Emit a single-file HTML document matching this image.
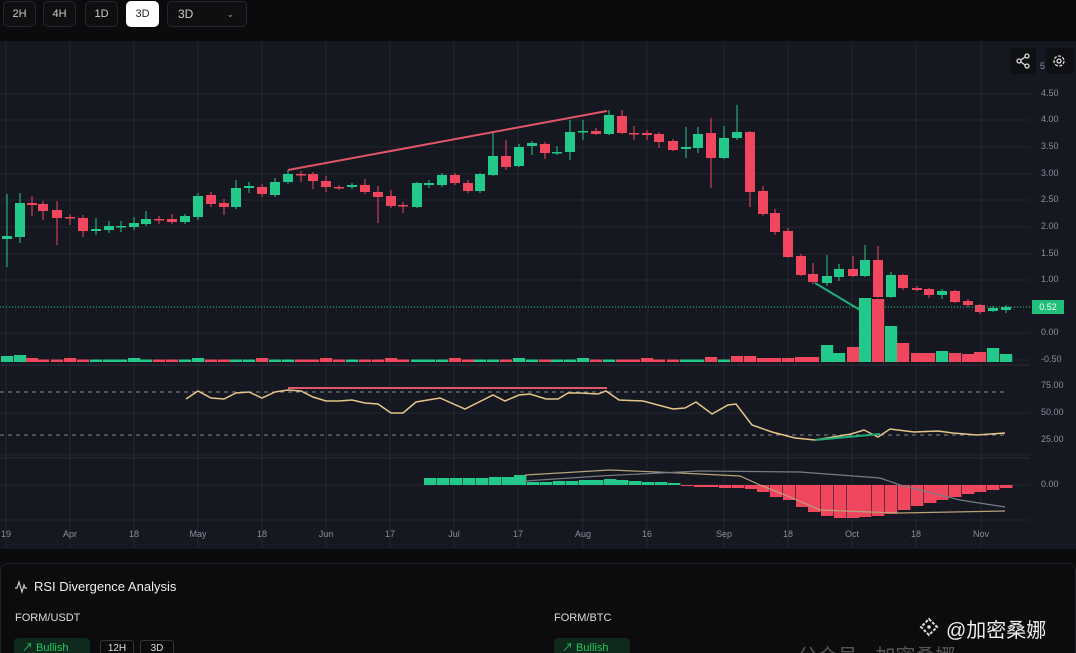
<!DOCTYPE html>
<html><head><meta charset="utf-8"><style>
*{margin:0;padding:0;box-sizing:border-box}
html,body{width:1076px;height:653px;overflow:hidden}
body{background:#0b0b0d;font-family:"Liberation Sans","Noto Sans CJK SC",sans-serif;color:#ddd;position:relative}
.btn{position:absolute;top:1px;height:26px;border:1px solid #26262a;border-radius:5px;background:#0f0f11;color:#ccc;font-size:11px;line-height:24px;text-align:center}
.lbl{position:absolute;font-size:9px;color:#8a8e99}
.card{position:absolute;left:0;top:563px;width:1076px;height:100px;border:1px solid #222226;border-radius:8px;background:#0c0c0e}
</style></head><body>
<div class="btn" style="left:3px;width:33px">2H</div>
<div class="btn" style="left:43px;width:33px">4H</div>
<div class="btn" style="left:85px;width:33px">1D</div>
<div class="btn" style="left:126px;width:33px;background:#fff;color:#222;border-color:#fff">3D</div>
<div class="btn" style="left:167px;width:80px;text-align:left;padding-left:10px;font-size:12px">3D<span style="position:absolute;right:12px;font-size:9px;color:#999">⌄</span></div>
<div style="position:absolute;left:0;top:41px;width:1076px;height:508px;background:#151821"></div>
<svg id="s" width="1076" height="653" style="position:absolute;left:0;top:0"></svg>
<div style="position:absolute;left:1010px;top:48px;width:26px;height:26px;background:#0e1014;border-radius:3px"></div>
<div style="position:absolute;left:1046px;top:48px;width:28px;height:26px;background:#0e1014;border-radius:3px"></div>
<div class="lbl" style="left:1040px;top:61px">5</div>
<div id="ax"></div>
<div style="position:absolute;left:1032px;top:300px;width:32px;height:14px;background:#1fbf7a;color:#fff;font-size:9px;line-height:14px;text-align:center">0.52</div>
<div class="card"></div>
<div style="position:absolute;left:34px;top:579px;font-size:13px;color:#eee">RSI Divergence Analysis</div>
<div style="position:absolute;left:15px;top:612px;font-size:11px;color:#ddd">FORM/USDT</div>
<div style="position:absolute;left:554px;top:612px;font-size:11px;color:#ddd">FORM/BTC</div>
<div style="position:absolute;left:14px;top:638px;width:76px;height:22px;background:#0f2a1d;border-radius:4px;color:#22c55e;font-size:11px;line-height:20px;padding-left:8px">↗ Bullish</div>
<div style="position:absolute;left:554px;top:638px;width:76px;height:22px;background:#0f2a1d;border-radius:4px;color:#22c55e;font-size:11px;line-height:20px;padding-left:8px">↗ Bullish</div>
<div style="position:absolute;left:100px;top:640px;width:34px;height:18px;border:1px solid #333;border-radius:3px;font-size:10px;text-align:center;line-height:16px">12H</div>
<div style="position:absolute;left:140px;top:640px;width:34px;height:18px;border:1px solid #333;border-radius:3px;font-size:10px;text-align:center;line-height:16px">3D</div>
<div style="position:absolute;left:946px;top:614px;font-size:20px;color:#eee">@加密桑娜</div>
<div style="position:absolute;left:780px;top:640px;font-size:20px;color:#555">● 公众号 · 加密桑娜</div>
<svg width="1076" height="653" style="position:absolute;left:0;top:0">
<g stroke="#ddd" stroke-width="1.3" fill="none"><circle cx="1027" cy="56" r="2"/><circle cx="1027" cy="66" r="2"/><circle cx="1019" cy="61" r="2"/><path d="M1021 60l4-3M1021 62l4 3"/>
<circle cx="1059" cy="61" r="2"/><circle cx="1059" cy="61" r="5" stroke-dasharray="3 1.5"/></g>
<path d="M15 588h2l2-6 3 10 2-7 1 3h2" stroke="#ccc" fill="none" stroke-width="1.2"/>
<path d="M929 619l8 8-8 8-8-8z" stroke="#ddd" fill="none" stroke-width="2" stroke-dasharray="3 1.5"/><circle cx="929" cy="627" r="1.8" fill="#ddd"/>
</svg>
<script>
var S=document.getElementById('s'),h='';
function L(x1,y1,x2,y2,c,w,d){h+='<line x1="'+x1+'" y1="'+y1+'" x2="'+x2+'" y2="'+y2+'" stroke="'+c+'" stroke-width="'+(w||1)+'"'+(d?' stroke-dasharray="'+d+'"':'')+'/>';}
function R(x,y,w,hh,c){h+='<rect x="'+x+'" y="'+y+'" width="'+w+'" height="'+hh+'" fill="'+c+'"/>';}
var vx=[6,70,134,198,262,326,390,454,518,583,647,724,788,852,916,981];
vx.forEach(function(x){L(x,42,x,548,'#22252e');});
[94,120,147,174,200,227,254,280,307,333,360,413,455,485,520].forEach(function(y){L(0,y,1030,y,'#22252e');});
L(0,365,1030,365,'#2a2d36');L(0,458,1030,458,'#2a2d36');
var G='#22c98a',Rd='#f0475f';
var c=[[7,239,236,194,267],[20,237,203,193,243],[32,203,205,196,216],[43,204,211,201,220],[57,210,218,201,245],[70,217,218,214,225],[83,218,231,215,237],[96,231,229,218,235],[109,230,226,221,233],[121,227,226,221,232],[134,227,223,217,230],[146,224,219,211,226],[159,219,220,216,224],[172,219,222,214,224],[185,222,216,214,224],[198,217,196,193,220],[211,195,204,192,207],[224,203,207,199,215],[236,207,188,180,209],[249,188,186,182,193],[262,187,194,184,197],[275,195,182,178,197],[288,182,174,170,184],[301,174,175,171,182],[313,174,181,172,189],[326,181,187,176,192],[339,187,188,185,190],[352,187,185,183,189],[365,185,192,179,194],[378,192,197,186,223],[391,196,206,190,208],[403,205,206,202,213],[417,207,183,182,208],[429,185,183,180,188],[442,185,175,173,187],[455,175,183,173,185],[468,183,191,180,193],[480,191,174,173,193],[493,175,156,133,176],[506,156,167,140,170],[519,166,147,144,167],[532,146,143,141,155],[545,144,153,142,159],[557,153,152,146,155],[570,152,132,120,160],[583,132,131,120,140],[596,131,134,128,135],[609,134,115,110,135],[622,116,133,110,134],[634,133,134,126,140],[647,133,135,130,140],[659,134,142,132,148],[673,141,150,139,151],[686,149,147,127,158],[698,148,134,127,153],[711,133,158,118,188],[724,158,138,126,159],[737,138,132,105,140],[750,132,192,131,207],[763,191,214,186,216],[775,213,232,209,235],[788,231,257,228,258],[801,256,275,254,276],[813,274,282,263,284],[827,283,276,255,286],[839,277,269,264,281],[853,269,276,256,277],[865,276,260,245,277],[878,260,297,246,298],[891,297,275,272,298],[903,275,288,274,290],[917,288,290,286,291],[929,289,295,288,298],[942,295,291,289,299],[955,291,302,290,303],[968,301,305,299,307],[980,305,312,304,314],[993,311,308,306,312],[1006,310,307,305,313]];
c.forEach(function(k){var col=k[2]<k[1]?G:Rd;L(k[0],k[3],k[0],k[4],col);var t=Math.min(k[1],k[2]),b=Math.max(k[1],k[2]);R(k[0]-5,t,10,Math.max(b-t,1.5),col);});
L(288,170,607,111,'#e05567',2);L(815,283,870,316,'#1fae78',2);
L(0,307,1030,307,'#1fbf7a',1,'1 2');
var big={827:[17,G],839:[9,G],853:[15,Rd],865:[64,G],878:[63,Rd],891:[36,G],903:[19,Rd],917:[9,Rd],929:[9,Rd],942:[11,G],955:[9,Rd],968:[8,Rd],980:[10,Rd],993:[14,G],1006:[8,G],737:[6,Rd],750:[6,Rd],763:[4,Rd],788:[4,Rd],801:[5,Rd],813:[5,Rd],711:[5,Rd],7:[6,G],20:[7,G],32:[4,Rd]};
c.forEach(function(k,i){var b=big[k[0]];var v=b?b[0]:(i%5==0?4:2.5);var col=b?b[1]:(k[2]<k[1]?G:Rd);R(k[0]-6,362-v,12.2,v,col);});
L(0,392,1007,392,'#888',1,'4 4');L(0,435,1007,435,'#888',1,'4 4');
var rp=[[186,399],[198,391],[211,398],[224,399],[236,393],[249,392],[262,398],[275,392],[288,390],[301,391],[313,397],[326,401],[339,401],[352,400],[365,403],[378,404],[391,413],[403,413],[416,402],[440,398],[465,409],[493,395],[505,401],[519,395],[530,394],[546,399],[558,399],[568,393],[580,393],[598,394],[606,391],[619,400],[643,401],[673,409],[685,408],[696,402],[712,414],[728,405],[736,404],[752,425],[772,432],[795,438],[815,440],[839,436],[851,434],[864,430],[878,437],[890,429],[914,432],[938,431],[953,433],[977,435],[1005,433]];
h+='<polyline fill="none" stroke="#e6c58a" stroke-width="1.5" points="'+rp.join(' ')+'"/>';
L(288,388,607,388,'#e05567',2);L(815,440,880,434,'#1fae78',2);
var gm=[[430,478],[443,478],[456,478],[469,478],[482,478],[495,477],[508,477],[520,475],[533,482],[546,482],[559,481],[572,481],[585,480],[597,480],[610,479],[622,480],[635,481],[648,482],[661,482],[674,483]];
gm.forEach(function(p){R(p[0]-6,p[1],12.4,485-p[1],G);});
var rm=[[687,486],[700,487],[712,487],[725,488],[738,488],[751,489],[763,492],[776,497],[789,500],[802,507],[814,512],[827,516],[840,518],[853,518],[865,517],[878,516],[891,514],[904,510],[917,506],[930,503],[942,500],[955,497],[968,494],[980,492],[993,490],[1006,488]];
rm.forEach(function(p){R(p[0]-6,485,12.4,p[1]-485,Rd);});
h+='<polyline fill="none" stroke="#b9a27a" stroke-width="1.2" points="525,475 610,470 680,473 740,476 760,485 790,497 820,510 870,512 900,513 1005,511"/>';
h+='<polyline fill="none" stroke="#777b85" stroke-width="1.2" points="525,481 600,476 700,471 800,472 880,478 900,485 960,500 1005,507"/>';
S.innerHTML=h;
var ax='';[['4.50',94],['4.00',120],['3.50',147],['3.00',174],['2.50',200],['2.00',227],['1.50',254],['1.00',280],['0.00',333],['-0.50',360],['75.00',386],['50.00',413],['25.00',440],['0.00',485]].forEach(function(a){ax+='<div class="lbl" style="left:1041px;top:'+(a[1]-6)+'px">'+a[0]+'</div>';});
[['19',6],['Apr',70],['18',134],['May',198],['18',262],['Jun',326],['17',390],['Jul',454],['17',518],['Aug',583],['16',647],['Sep',724],['18',788],['Oct',852],['18',916],['Nov',981]].forEach(function(a){ax+='<div class="lbl" style="left:'+(a[1]-10)+'px;width:20px;text-align:center;top:529px">'+a[0]+'</div>';});
document.getElementById('ax').innerHTML=ax;
</script>
</body></html>
